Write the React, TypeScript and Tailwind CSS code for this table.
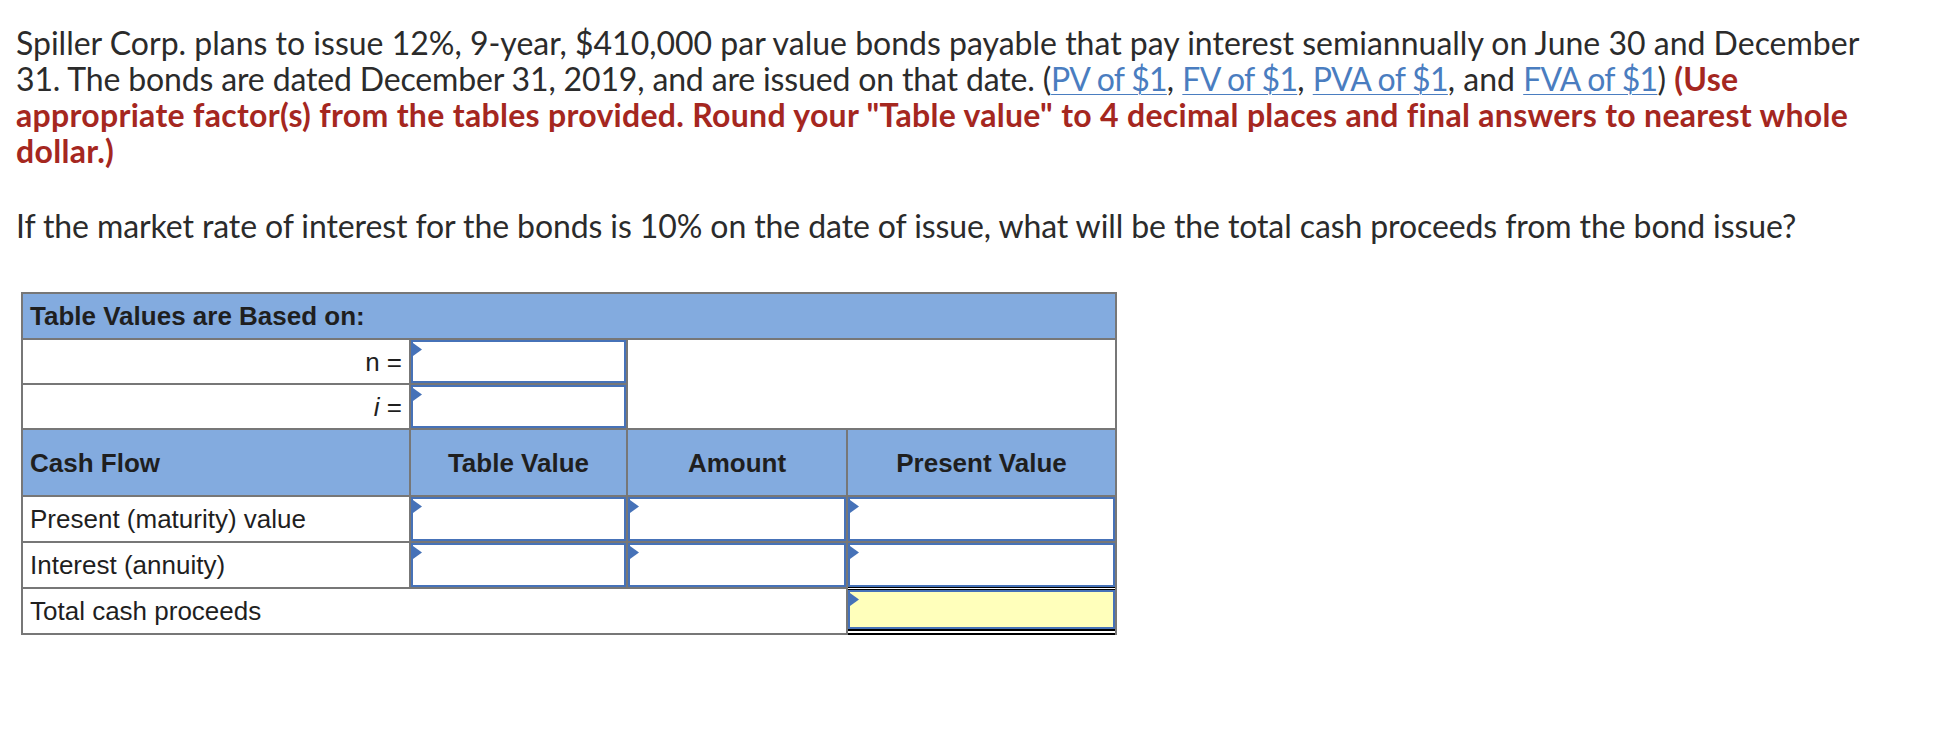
import React from "react";

const Tri = () => (
  <svg width="10" height="14" viewBox="0 0 10 14" className="block shrink-0">
    <polygon points="0,0 9,6.5 0,13" fill="#4672b8" />
  </svg>
);

function InputCell({ yellow }: { yellow?: boolean }) {
  return (
    <div
      className={
        yellow
          ? "h-full w-full border-2 border-[#4672b8] bg-[#ffffbb] pt-px"
          : "h-full w-full border-2 border-[#4672b8] bg-white pt-px"
      }
    >
      <Tri />
    </div>
  );
}

const Link = ({ children }: { children: React.ReactNode }) => (
  <a className="tracking-[-0.7px] text-[#4a7dc0] underline decoration-1 underline-offset-[3px]">{children}</a>
);

export default function App() {
  return (
    <div className="min-h-[730px] w-[1934px] bg-white">
      <div className="pl-[16px] pt-[25px] font-['Lato',sans-serif] text-[32px] leading-[36px] text-[#2b2b2b]">
        <p className="whitespace-nowrap">
          Spiller Corp. plans to issue 12%, 9-year, $410,000 par value bonds payable that pay interest semiannually on June 30 and December
          <br />
          <span className="tracking-[-0.15px]">31. The bonds are dated December 31, 2019, and are issued on that date. (</span>
          <Link>PV of $1</Link>, <Link>FV of $1</Link>, <Link>PVA of $1</Link>, and <Link>FVA of $1</Link>){" "}
          <span className="font-bold tracking-[0.3px] text-[#a5271f]">(Use</span>
          <br />
          <span className="font-bold tracking-[0.3px] text-[#a5271f]">
            appropriate factor(s) from the tables provided. Round your "Table value" to 4 decimal places and final answers to nearest whole
            <br />
            dollar.)
          </span>
        </p>
        <p className="mt-[39px] whitespace-nowrap tracking-[-0.1px]">
          If the market rate of interest for the bonds is 10% on the date of issue, what will be the total cash proceeds from the bond issue?
        </p>

        <div className="ml-[5px] mt-[48px] inline-grid grid-cols-[386px_215px_218px_267px] grid-rows-[44px_43px_43px_65px_44px_44px_44px] gap-[2px] bg-[#777777] p-[2px] font-['Liberation_Sans',Arial,sans-serif] text-[26px] leading-none text-[#1f1f1f]">
          <div className="col-span-4 flex items-center bg-[#83abdf] pl-[7px] font-bold">Table Values are Based on:</div>

          <div className="flex items-center justify-end bg-white pr-[7px]">n =</div>
          <InputCell />
          <div className="col-span-2 row-span-2 bg-white" />

          <div className="flex items-center justify-end bg-white pr-[7px]">
            <span className="italic">i</span>&nbsp;=
          </div>
          <InputCell />

          <div className="flex items-center bg-[#83abdf] pl-[7px] font-bold">Cash Flow</div>
          <div className="flex items-center justify-center bg-[#83abdf] font-bold">Table Value</div>
          <div className="flex items-center justify-center bg-[#83abdf] font-bold">Amount</div>
          <div className="flex items-center justify-center bg-[#83abdf] font-bold">Present Value</div>

          <div className="flex items-center bg-white pl-[7px]">Present (maturity) value</div>
          <InputCell />
          <InputCell />
          <InputCell />

          <div className="flex items-center bg-white pl-[7px]">Interest (annuity)</div>
          <InputCell />
          <InputCell />
          <InputCell />

          <div className="col-span-3 flex items-center bg-white pl-[7px]">Total cash proceeds</div>
          <div className="mb-[-2px] mt-[-2px] border-b-[6px] border-t-[3px] border-double border-black bg-white">
            <div className="h-full border-2 border-[#4672b8] bg-[#ffffbb] pt-px">
              <Tri />
            </div>
          </div>
        </div>
      </div>
    </div>
  );
}
